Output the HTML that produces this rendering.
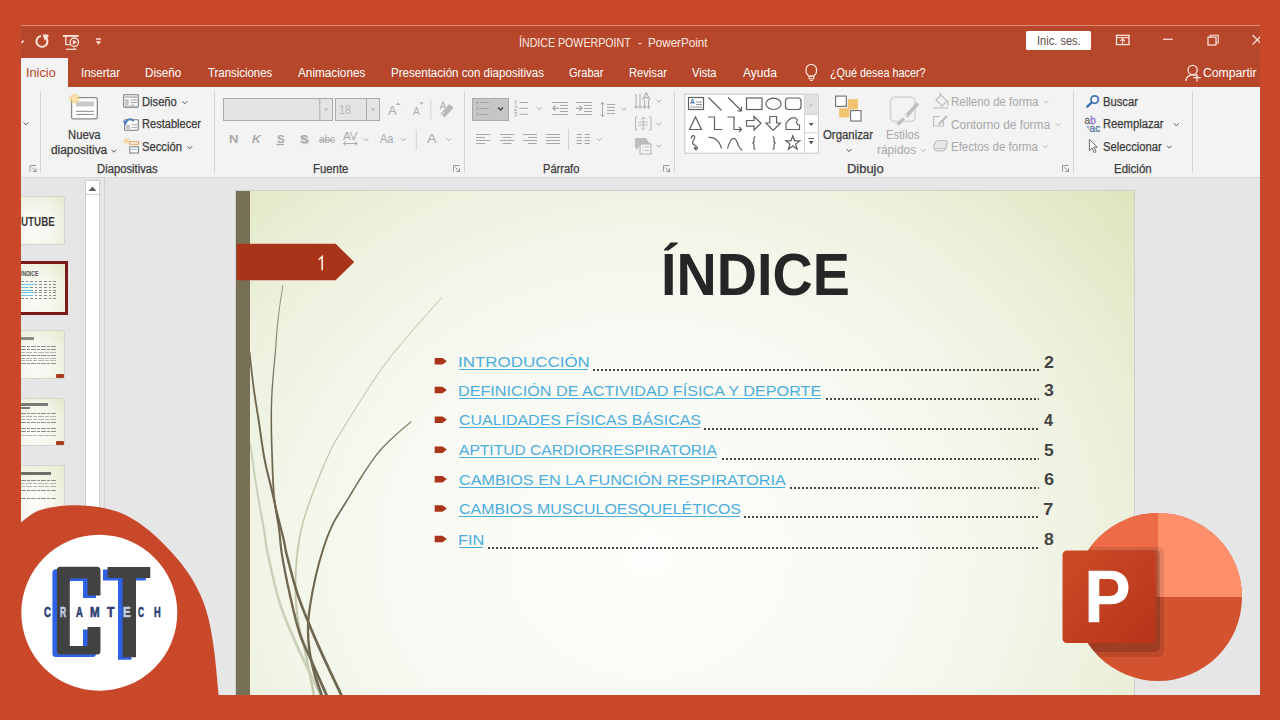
<!DOCTYPE html>
<html><head><meta charset="utf-8"><style>
html,body{margin:0;padding:0;}
body{width:1280px;height:720px;overflow:hidden;position:relative;background:#C9482A;font-family:"Liberation Sans",sans-serif;}
.t{position:absolute;white-space:nowrap;transform-origin:0 0;}
.r{position:absolute;}
svg{position:absolute;overflow:visible;}
</style></head><body>
<div class="r" style="left:21px;top:25px;width:1239px;height:1px;background:#DC8A72;"></div>
<div class="r" style="left:21px;top:26px;width:1239px;height:61px;background:#B7472A;"></div>
<div class="r" style="left:21px;top:87px;width:1239px;height:90px;background:#F3F3F3;"></div>
<div class="r" style="left:21px;top:177px;width:1239px;height:1px;background:#D9D9D9;"></div>
<div class="r" style="left:21px;top:178px;width:1239px;height:517px;background:#E6E6E6;"></div>
<div class="r" style="left:21px;top:58px;width:47px;height:29px;background:#F3F3F3;"></div>
<div class="t" style="left:519.09px;top:37.44px;font-size:12px;line-height:12px;color:#FDEAE2;transform:scaleX(0.8864);">ÍNDICE POWERPOINT</div>
<div class="t" style="left:637.92px;top:37.44px;font-size:12px;line-height:12px;color:#FDEAE2;transform:scaleX(0.9667);">-</div>
<div class="t" style="left:647.73px;top:37.44px;font-size:12px;line-height:12px;color:#FDEAE2;transform:scaleX(0.9701);">PowerPoint</div>
<div class="r" style="left:1026px;top:31px;width:65px;height:18.6px;background:#FFFFFF;border-radius:1.5px;"></div>
<div class="t" style="left:1036.79px;top:35.44px;font-size:12px;line-height:12px;color:#604C48;transform:scaleX(0.9224);">Inic. ses.</div>
<div class="t" style="left:80.64px;top:66.94px;font-size:12px;line-height:12px;color:#FFFFFF;transform:scaleX(0.9594);">Insertar</div>
<div class="t" style="left:145.03px;top:66.94px;font-size:12px;line-height:12px;color:#FFFFFF;transform:scaleX(0.9694);">Diseño</div>
<div class="t" style="left:207.71px;top:66.94px;font-size:12px;line-height:12px;color:#FFFFFF;transform:scaleX(0.9507);">Transiciones</div>
<div class="t" style="left:298.00px;top:66.94px;font-size:12px;line-height:12px;color:#FFFFFF;transform:scaleX(0.9810);">Animaciones</div>
<div class="t" style="left:390.79px;top:66.94px;font-size:12px;line-height:12px;color:#FFFFFF;transform:scaleX(0.9641);">Presentación con diapositivas</div>
<div class="t" style="left:569.45px;top:66.94px;font-size:12px;line-height:12px;color:#FFFFFF;transform:scaleX(0.9221);">Grabar</div>
<div class="t" style="left:629.07px;top:66.94px;font-size:12px;line-height:12px;color:#FFFFFF;transform:scaleX(0.9304);">Revisar</div>
<div class="t" style="left:692.41px;top:66.94px;font-size:12px;line-height:12px;color:#FFFFFF;transform:scaleX(0.9280);">Vista</div>
<div class="t" style="left:743.00px;top:66.94px;font-size:12px;line-height:12px;color:#FFFFFF;">Ayuda</div>
<div class="t" style="left:829.78px;top:66.94px;font-size:12px;line-height:12px;color:#FFFFFF;transform:scaleX(0.9017);">¿Qué desea hacer?</div>
<div class="t" style="left:1203.14px;top:66.94px;font-size:12px;line-height:12px;color:#FFFFFF;transform:scaleX(1.0164);">Compartir</div>
<div class="t" style="left:25.83px;top:66.94px;font-size:12px;line-height:12px;color:#B7472A;transform:scaleX(1.0606);">Inicio</div>
<svg style="left:0;top:0" width="1280" height="720" fill="none" stroke="#FCE6DE" stroke-width="1.6">
<path d="M21.5 43 L23.5 40.5"/>
<path d="M40.9 35.9 A5.5 5.5 0 1 0 45.6 37.2" stroke-width="2"/>
<polygon points="42.6,34.6 48.4,34.6 48.4,36.4 44.8,40.4" fill="#FCE6DE" stroke="none"/>
<path d="M62.9 35.9 L78.7 35.9" stroke-width="1.8"/>
<path d="M65.8 36 L65.8 44.6 L69.8 44.6" stroke-width="1.3"/>
<circle cx="74.3" cy="42.2" r="4.2" stroke-width="1.3"/>
<polygon points="72.9,39.8 77.1,42.2 72.9,44.6" fill="#FCE6DE" stroke="none"/><polygon points="73.6,49 74.3,47 75,49" fill="#FCE6DE" stroke="none"/>
<path d="M66 49.3 L76.5 49.3" stroke-width="1.2"/>
<path d="M96 39 L101 39" stroke-width="1.4"/>
<polygon points="95.8,41.3 101.2,41.3 98.5,44.8" fill="#FCE6DE" stroke="none"/>
<rect x="1116.5" y="35.3" width="12.5" height="9.3" stroke-width="1.3"/>
<path d="M1116.5 37.6 L1129 37.6" stroke-width="1.1"/>
<path d="M1122.7 44 L1122.7 39 M1120.4 41.2 L1122.7 38.8 L1125 41.2" stroke-width="1.1"/>
<path d="M1163 39.3 L1172.8 39.3" stroke-width="1.2"/>
<rect x="1208" y="37.2" width="8" height="7.8" stroke-width="1.2"/>
<path d="M1210.2 37.2 L1210.2 35.2 L1218.2 35.2 L1218.2 43 L1216 43" stroke-width="1.1"/>
<path d="M1252.5 35 L1262 44.6 M1262 35 L1252.5 44.6" stroke-width="1.3"/>
<circle cx="1192.6" cy="70" r="4.6" stroke-width="1.3"/>
<path d="M1185.5 80.8 C1186.5 76.8 1189.5 74.8 1193 74.8 C1194.5 74.8 1195.6 75.2 1196.6 75.8" stroke-width="1.3"/>
<path d="M1197 74 L1197 81.5 M1193.2 77.7 L1200.8 77.7" stroke-width="1.3"/>
<path d="M807.2 74.2 C805.6 72.8 806.1 71.4 806.1 69.5 A5.2 5.2 0 0 1 816.5 69.5 C816.5 71.4 817 72.8 815.4 74.2 L813.8 76.2 L808.8 76.2 Z" stroke-width="1.2"/>
<rect x="809.2" y="76.3" width="4.5" height="2.5" stroke-width="1.1"/>
<path d="M810 80.4 L812.8 80.4" stroke-width="1.1"/>
</svg>
<div class="t" style="left:67.76px;top:129.24px;font-size:12px;line-height:12px;color:#3B3B3B;-webkit-text-stroke:0.25px #3B3B3B;transform:scaleX(0.9377);">Nueva</div>
<div class="t" style="left:50.50px;top:144.14px;font-size:12px;line-height:12px;color:#3B3B3B;-webkit-text-stroke:0.25px #3B3B3B;transform:scaleX(0.9911);">diapositiva</div>
<div class="t" style="left:141.67px;top:96.04px;font-size:12px;line-height:12px;color:#3B3B3B;-webkit-text-stroke:0.25px #3B3B3B;transform:scaleX(0.9304);">Diseño</div>
<div class="t" style="left:141.68px;top:118.44px;font-size:12px;line-height:12px;color:#3B3B3B;-webkit-text-stroke:0.25px #3B3B3B;transform:scaleX(0.9220);">Restablecer</div>
<div class="t" style="left:141.83px;top:141.04px;font-size:12px;line-height:12px;color:#3B3B3B;-webkit-text-stroke:0.25px #3B3B3B;transform:scaleX(0.9348);">Sección</div>
<div class="t" style="left:96.66px;top:163.14px;font-size:12px;line-height:12px;color:#3B3B3B;-webkit-text-stroke:0.25px #3B3B3B;transform:scaleX(0.9384);">Diapositivas</div>
<div class="t" style="left:313.05px;top:163.14px;font-size:12px;line-height:12px;color:#3B3B3B;-webkit-text-stroke:0.25px #3B3B3B;transform:scaleX(0.9471);">Fuente</div>
<div class="t" style="left:543.08px;top:163.14px;font-size:12px;line-height:12px;color:#3B3B3B;-webkit-text-stroke:0.25px #3B3B3B;transform:scaleX(0.9235);">Párrafo</div>
<div class="t" style="left:823.18px;top:129.44px;font-size:12px;line-height:12px;color:#3B3B3B;-webkit-text-stroke:0.25px #3B3B3B;transform:scaleX(0.9489);">Organizar</div>
<div class="t" style="left:846.92px;top:163.14px;font-size:12px;line-height:12px;color:#3B3B3B;-webkit-text-stroke:0.25px #3B3B3B;transform:scaleX(1.0769);">Dibujo</div>
<div class="t" style="left:886.06px;top:129.44px;font-size:12px;line-height:12px;color:#A8A8A8;transform:scaleX(0.9440);">Estilos</div>
<div class="t" style="left:877.20px;top:144.24px;font-size:12px;line-height:12px;color:#A8A8A8;transform:scaleX(0.9948);">rápidos</div>
<div class="t" style="left:950.54px;top:96.44px;font-size:12px;line-height:12px;color:#A8A8A8;transform:scaleX(0.9569);">Relleno de forma</div>
<div class="t" style="left:950.91px;top:118.84px;font-size:12px;line-height:12px;color:#A8A8A8;transform:scaleX(0.9899);">Contorno de forma</div>
<div class="t" style="left:950.54px;top:141.04px;font-size:12px;line-height:12px;color:#A8A8A8;transform:scaleX(0.9588);">Efectos de forma</div>
<div class="t" style="left:1102.66px;top:96.04px;font-size:12px;line-height:12px;color:#3B3B3B;-webkit-text-stroke:0.25px #3B3B3B;transform:scaleX(0.9365);">Buscar</div>
<div class="t" style="left:1102.66px;top:118.44px;font-size:12px;line-height:12px;color:#3B3B3B;-webkit-text-stroke:0.25px #3B3B3B;transform:scaleX(0.9354);">Reemplazar</div>
<div class="t" style="left:1103.13px;top:141.04px;font-size:12px;line-height:12px;color:#3B3B3B;-webkit-text-stroke:0.25px #3B3B3B;transform:scaleX(0.9371);">Seleccionar</div>
<div class="t" style="left:1113.54px;top:163.14px;font-size:12px;line-height:12px;color:#3B3B3B;-webkit-text-stroke:0.25px #3B3B3B;transform:scaleX(0.9574);">Edición</div>
<svg style="left:0;top:0" width="1280" height="720" fill="none"><path d="M23.5 122.5 L25.8 124.8 L28.1 122.5" stroke="#555" stroke-width="1"/><rect x="71.6" y="97.7" width="25.7" height="21.2" rx="1.6" fill="#FFF" stroke="#8A8A8A" stroke-width="1.3"/><rect x="76" y="101.5" width="18" height="5" fill="#C9C9C9"/><path d="M76 111.3 L94 111.3 M76 114.4 L94 114.4" stroke="#8A8A8A" stroke-width="1"/><g stroke="#F4D28C" stroke-width="0.9"><path d="M74.6 98.7 L80.20 98.70"/><path d="M74.6 98.7 L79.77 100.84"/><path d="M74.6 98.7 L78.56 102.66"/><path d="M74.6 98.7 L76.74 103.87"/><path d="M74.6 98.7 L74.60 104.30"/><path d="M74.6 98.7 L72.46 103.87"/><path d="M74.6 98.7 L70.64 102.66"/><path d="M74.6 98.7 L69.43 100.84"/><path d="M74.6 98.7 L69.00 98.70"/><path d="M74.6 98.7 L69.43 96.56"/><path d="M74.6 98.7 L70.64 94.74"/><path d="M74.6 98.7 L72.46 93.53"/><path d="M74.6 98.7 L74.60 93.10"/><path d="M74.6 98.7 L76.74 93.53"/><path d="M74.6 98.7 L78.56 94.74"/><path d="M74.6 98.7 L79.77 96.56"/></g><circle cx="74.6" cy="98.7" r="3.2" fill="#F9E3B0" stroke="#F2C46F" stroke-width="0.6"/><path d="M111.5 149.8 L113.8 152.2 L116.1 149.8" stroke="#555" stroke-width="1"/><rect x="123.7" y="94.7" width="14.6" height="12.4" rx="0.8" fill="#FFF" stroke="#7A7A7A" stroke-width="1.1"/><rect x="124.8" y="96.2" width="12.4" height="1.8" fill="#BDBDBD"/><rect x="125.2" y="99.2" width="3.6" height="6.6" fill="#C4C4C4"/><path d="M130.5 100 L136.8 100 M130.5 102.6 L136.8 102.6 M130.5 105.2 L134.5 105.2" stroke="#8A8A8A" stroke-width="0.9"/><path d="M182.5 101.3 L184.8 103.7 L187.1 101.3" stroke="#555" stroke-width="1"/><rect x="124.6" y="119.7" width="13.7" height="10.5" rx="0.8" fill="#FFF" stroke="#7A7A7A" stroke-width="1.1"/><rect x="126" y="124.8" width="4" height="4.2" fill="#C4C4C4"/><path d="M131.5 124.8 L137 124.8 M131.5 127.6 L137 127.6" stroke="#A0A0A0" stroke-width="0.9"/><path d="M125.5 123.3 C126.5 119.2 131 117.6 133.5 121.2" stroke="#4A7FC1" stroke-width="1.8" fill="none"/><polygon points="122.8,121.2 127.6,121 125.4,125.4" fill="#4A7FC1"/><g stroke="#F2CF86" stroke-width="1"><path d="M126.5 141 L130.30 141.00"/><path d="M126.5 141 L129.19 143.69"/><path d="M126.5 141 L126.50 144.80"/><path d="M126.5 141 L123.81 143.69"/><path d="M126.5 141 L122.70 141.00"/><path d="M126.5 141 L123.81 138.31"/><path d="M126.5 141 L126.50 137.20"/><path d="M126.5 141 L129.19 138.31"/></g><rect x="129.8" y="141.6" width="8.7" height="2.7" fill="none" stroke="#F0A35E" stroke-width="1"/><rect x="129.8" y="146.8" width="8.7" height="6.2" fill="#FFF" stroke="#7A7A7A" stroke-width="1"/><path d="M131 149.3 L137.3 149.3" stroke="#9BB4D6" stroke-width="1"/><path d="M187.5 146.3 L189.8 148.7 L192.1 146.3" stroke="#555" stroke-width="1"/><path d="M30 171.5 L30 165.5 L36 165.5" stroke="#8E8E8E" stroke-width="0.9"/><path d="M31.8 167.3 L36 171.5 M36 168.3 L36 171.5 L32.8 171.5" stroke="#8E8E8E" stroke-width="0.9"/><path d="M453.5 171.5 L453.5 165.5 L459.5 165.5" stroke="#8E8E8E" stroke-width="0.9"/><path d="M455.3 167.3 L459.5 171.5 M459.5 168.3 L459.5 171.5 L456.3 171.5" stroke="#8E8E8E" stroke-width="0.9"/><path d="M663.5 171.5 L663.5 165.5 L669.5 165.5" stroke="#8E8E8E" stroke-width="0.9"/><path d="M665.3 167.3 L669.5 171.5 M669.5 168.3 L669.5 171.5 L666.3 171.5" stroke="#8E8E8E" stroke-width="0.9"/><path d="M1062.5 171.5 L1062.5 165.5 L1068.5 165.5" stroke="#8E8E8E" stroke-width="0.9"/><path d="M1064.3 167.3 L1068.5 171.5 M1068.5 168.3 L1068.5 171.5 L1065.3 171.5" stroke="#8E8E8E" stroke-width="0.9"/><rect x="223.5" y="98.5" width="109" height="22" fill="#E4E4E4" stroke="#ABABAB" stroke-width="1"/><path d="M319.8 98.5 L319.8 120.5" stroke="#ABABAB" stroke-width="1"/><polygon points="323.8,108.6 328.2,108.6 326,111" fill="#B5B5B5"/><rect x="335.5" y="98.5" width="44" height="22" fill="#E4E4E4" stroke="#ABABAB" stroke-width="1"/><path d="M366.5 98.5 L366.5 120.5" stroke="#ABABAB" stroke-width="1"/><polygon points="370.8,108.6 375.2,108.6 373,111" fill="#B5B5B5"/><polygon points="396,105 398.2,102.5 400.4,105" fill="#B0B0B0"/><polygon points="419.5,102.2 423.8,102.2 421.6,104.8" fill="#B0B0B0"/><path d="M430.8 99 L430.8 119.5 M416.3 129.5 L416.3 150" stroke="#D2D2D2" stroke-width="1"/><path d="M440 109.5 L443 102 L446 109.5 M441.2 106.8 L444.8 106.8" stroke="#B5B5B5" stroke-width="1.2"/><path d="M442.5 115.5 L451.5 106" stroke="#B8B8B8" stroke-width="5.5"/><path d="M441.6 114.6 L444.2 111.8" stroke="#F3F3F3" stroke-width="1"/><path d="M276.5 144.5 L284 144.5" stroke="#A6A6A6" stroke-width="1.3"/><path d="M318.8 140.2 L335.2 140.2" stroke="#A6A6A6" stroke-width="1"/><path d="M343.5 143.6 L357 143.6 M345.5 141.6 L343.5 143.6 L345.5 145.6 M355 141.6 L357 143.6 L355 145.6" stroke="#A6A6A6" stroke-width="1"/><path d="M363.8 138.3 L366.1 140.7 L368.4 138.3" stroke="#A9A9A9" stroke-width="1"/><path d="M400.8 138.3 L403.1 140.7 L405.4 138.3" stroke="#A9A9A9" stroke-width="1"/><path d="M446.5 138.3 L448.8 140.7 L451.1 138.3" stroke="#A9A9A9" stroke-width="1"/><rect x="472.5" y="98.5" width="36" height="22" fill="#C6C6C6" stroke="#A9A9A9" stroke-width="1"/><circle cx="477.5" cy="102.5" r="0.9" fill="#9A9A9A"/><path d="M480.5 102.5 L489 102.5" stroke="#9E9E9E" stroke-width="0.9"/><circle cx="477.5" cy="108.5" r="0.9" fill="#9A9A9A"/><path d="M480.5 108.5 L489 108.5" stroke="#9E9E9E" stroke-width="0.9"/><circle cx="477.5" cy="114.5" r="0.9" fill="#9A9A9A"/><path d="M480.5 114.5 L489 114.5" stroke="#9E9E9E" stroke-width="0.9"/><path d="M498.2 107.6 L500.6 110 L503 107.6" stroke="#444" stroke-width="1.4"/><path d="M519.5 102.5 L528 102.5" stroke="#A9A9A9" stroke-width="1"/><path d="M519.5 108.3 L528 108.3" stroke="#A9A9A9" stroke-width="1"/><path d="M519.5 114.3 L528 114.3" stroke="#A9A9A9" stroke-width="1"/><path d="M514.6 101.2 L515.8 100.4 L515.8 104.6 M514.4 106.8 C514.8 105.8 517 105.8 517 107 C517 108 514.4 109.2 514.4 110.4 L517.2 110.4 M514.4 112.4 L516.8 112.4 L515.4 114 C517.4 114 517.4 116.6 514.4 116.4" stroke="#A9A9A9" stroke-width="0.9"/><path d="M537.0 107.3 L539.3 109.7 L541.6 107.3" stroke="#A9A9A9" stroke-width="1"/><path d="M552 102.5 L568 102.5 M560 105.5 L568 105.5 M560 108.5 L568 108.5 M560 111.5 L568 111.5 M552 114.5 L568 114.5" stroke="#A9A9A9" stroke-width="1"/><path d="M559 108.3 L553 108.3 M555.5 105.8 L553 108.3 L555.5 110.8" stroke="#A9A9A9" stroke-width="1.3"/><path d="M576 102.5 L592 102.5 M584 105.5 L592 105.5 M584 108.5 L592 108.5 M584 111.5 L592 111.5 M576 114.5 L592 114.5" stroke="#A9A9A9" stroke-width="1"/><path d="M576 108.3 L582 108.3 M579.5 105.8 L582 108.3 L579.5 110.8" stroke="#A9A9A9" stroke-width="1.3"/><path d="M602.5 102.5 L602.5 116.5 M600.5 104.5 L602.5 102.3 L604.5 104.5 M600.5 114.5 L602.5 116.7 L604.5 114.5 M607 104.5 L615 104.5 M607 107.5 L615 107.5 M607 110.5 L615 110.5 M607 113.5 L615 113.5" stroke="#A9A9A9" stroke-width="1"/><path d="M621.5 107.8 L623.8 110.2 L626.1 107.8" stroke="#A9A9A9" stroke-width="1"/><path d="M476 134.5 L490 134.5 M476 137.5 L485 137.5 M476 140.5 L490 140.5 M476 143.5 L485 143.5" stroke="#A9A9A9" stroke-width="1"/><path d="M500 134.5 L514 134.5 M502.5 137.5 L511.5 137.5 M500 140.5 L514 140.5 M502.5 143.5 L511.5 143.5" stroke="#A9A9A9" stroke-width="1"/><path d="M523 134.5 L537 134.5 M528 137.5 L537 137.5 M523 140.5 L537 140.5 M528 143.5 L537 143.5" stroke="#A9A9A9" stroke-width="1"/><path d="M546 134.5 L560 134.5 M546 137.5 L560 137.5 M546 140.5 L560 140.5 M546 143.5 L560 143.5" stroke="#A9A9A9" stroke-width="1"/><path d="M568.5 129 L568.5 150" stroke="#D2D2D2" stroke-width="1"/><path d="M576.5 134.5 L582 134.5 M584.5 134.5 L590 134.5 M576.5 137.5 L582 137.5 M584.5 137.5 L590 137.5 M576.5 140.5 L582 140.5 M584.5 140.5 L590 140.5 M576.5 143.5 L582 143.5 M584.5 143.5 L590 143.5" stroke="#A9A9A9" stroke-width="1"/><path d="M596.8 138.3 L599.1 140.7 L601.4 138.3" stroke="#A9A9A9" stroke-width="1"/><path d="M636 94 L636 108 M640 94 L640 108 M644.5 100 L644.5 108 M648.5 100 L648.5 108" stroke="#B0B0B0" stroke-width="1.1"/><path d="M634.3 106 L636 108.5 L637.7 106 M638.3 106 L640 108.5 L641.7 106 M642.8 106 L644.5 108.5 L646.2 106 M646.8 106 L648.5 108.5 L650.2 106" stroke="#B0B0B0" stroke-width="1"/><path d="M642.6 100 L646.3 92.8 L650 100 M643.8 97.6 L648.8 97.6" stroke="#B0B0B0" stroke-width="1.2"/><path d="M656.5 99.8 L658.8 102.2 L661.1 99.8" stroke="#A9A9A9" stroke-width="1"/><path d="M637.5 117 L635.5 117 L635.5 130 L637.5 130 M649 117 L651 117 L651 130 L649 130" stroke="#B5B5B5" stroke-width="1"/><path d="M643.2 117 L643.2 130 M641 119.3 L643.2 117 L645.4 119.3 M641 127.7 L643.2 130 L645.4 127.7 M638.5 122 L648 122 M638.5 125 L648 125" stroke="#B5B5B5" stroke-width="0.9"/><path d="M656.5 122.8 L658.8 125.2 L661.1 122.8" stroke="#A9A9A9" stroke-width="1"/><polygon points="635,138 646,138 650,144 640,144 637,150 635,147" fill="#BDBDBD"/><rect x="640" y="144" width="11" height="10" fill="#F3F3F3" stroke="#B0B0B0" stroke-width="1"/><path d="M642.5 147 L643.5 147 M645 147 L649 147 M642.5 150.5 L643.5 150.5 M645 150.5 L649 150.5" stroke="#B8B8B8" stroke-width="0.9"/><path d="M656.5 144.8 L658.8 147.2 L661.1 144.8" stroke="#A9A9A9" stroke-width="1"/><rect x="684.8" y="94.2" width="133.5" height="59" fill="#FFFFFF" stroke="#C6C6C6" stroke-width="1"/><rect x="804.5" y="94.7" width="13.3" height="19.7" fill="#E1E1E1"/><path d="M804.5 94.2 L804.5 153.2 M804.5 114.4 L818.3 114.4 M804.5 132.8 L818.3 132.8" stroke="#D4D4D4" stroke-width="1"/><polygon points="809,106 811.2,103.5 813.4,106" fill="#C4C4C4"/><polygon points="808.8,123 813.6,123 811.2,126" fill="#555"/><path d="M808.5 138.5 L813.9 138.5" stroke="#555" stroke-width="1"/><polygon points="808.8,141 813.6,141 811.2,144.5" fill="#555"/><rect x="688.5" y="97.5" width="15" height="12" fill="#FFF" stroke="#606060" stroke-width="1.2"/><path d="M696 102 L702 102 M696 104.5 L702 104.5 M690 107 L702 107" stroke="#7A7A7A" stroke-width="0.8"/><text x="690" y="104.2" font-size="6.5" font-weight="bold" fill="#4B72A8" font-family="Liberation Sans">A</text><path d="M708.5 97.5 L721.5 110.5" stroke="#606060" stroke-width="1.2"/><path d="M728 97.5 L741.5 110.8 M737.5 110.8 L741.5 110.8 L741.5 106.8" stroke="#606060" stroke-width="1.2"/><rect x="746.5" y="98" width="15.5" height="11.5" fill="none" stroke="#606060" stroke-width="1.2"/><ellipse cx="773.5" cy="103.8" rx="7.6" ry="5.7" fill="none" stroke="#606060" stroke-width="1.2"/><rect x="785.5" y="98" width="15.5" height="11.5" rx="3" fill="none" stroke="#606060" stroke-width="1.2"/><polygon points="695.5,117 701.5,129.5 689.5,129.5" fill="none" stroke="#606060" stroke-width="1.2"/><path d="M708 117 L714.5 117 L714.5 129.5 L722.5 129.5" fill="none" stroke="#606060" stroke-width="1.2"/><path d="M727.5 117 L734 117 L734 129.5 L741.5 129.5 M739 127 L741.5 129.5 L739 132" fill="none" stroke="#606060" stroke-width="1.2"/><polygon points="746.5,120.5 754,120.5 754,116.5 761,123.3 754,130 754,126.2 746.5,126.2" fill="none" stroke="#606060" stroke-width="1.2"/><polygon points="769.8,116.5 776.6,116.5 776.6,123 780.5,123 773.2,130.3 766,123 769.8,123" fill="none" stroke="#606060" stroke-width="1.2"/><path d="M786 123.5 L786 129.5 L799.5 129.5 L799.5 125 C797 125 795.5 122.5 797.5 120 C795 116 790 117 786 123.5 Z" fill="none" stroke="#606060" stroke-width="1.2"/><path d="M691 138.5 C692 134.5 695.5 135 694.5 138.5 C693.5 141 691.5 142 693 144 C694.5 145.5 697.5 145.5 697.5 148 C697.5 150 694.5 150 694.5 148 C694.5 146.5 696.5 147 696 150.5" fill="none" stroke="#606060" stroke-width="1.2"/><path d="M708.5 137.5 C714 137 719.5 140.5 721.5 148.5" fill="none" stroke="#606060" stroke-width="1.2"/><path d="M727.5 148.5 C731 136 735 136 737.5 143 C739.5 149 741 150 742.5 150" fill="none" stroke="#606060" stroke-width="1.2"/><path d="M755.5 136.5 C753.5 136.5 754 139 754 141 C754 142.5 753 143 752.2 143 C753 143 754 143.5 754 145 C754 147 753.5 149.5 755.5 149.5" fill="none" stroke="#606060" stroke-width="1.2"/><path d="M772.5 136.5 C774.5 136.5 774 139 774 141 C774 142.5 775 143 775.8 143 C775 143 774 143.5 774 145 C774 147 774.5 149.5 772.5 149.5" fill="none" stroke="#606060" stroke-width="1.2"/><polygon points="792.8,135.8 794.6,140.8 799.8,140.9 795.6,144.1 797.2,149.2 792.8,146.1 788.4,149.2 790,144.1 785.8,140.9 791,140.8" fill="none" stroke="#606060" stroke-width="1.2"/><rect x="847.8" y="99.1" width="10.2" height="10.2" fill="#F2C46F"/><rect x="839.2" y="108.3" width="10.1" height="9.1" fill="#F2C46F"/><rect x="835.6" y="96.1" width="10.7" height="10.3" fill="#FFF" stroke="#6E6E6E" stroke-width="1.1"/><rect x="850.6" y="110.6" width="10.4" height="10.4" fill="#FFF" stroke="#6E6E6E" stroke-width="1.1"/><path d="M846.8 149.2 L849.1 151.6 L851.4 149.2" stroke="#444" stroke-width="1"/><rect x="890.5" y="97" width="24.5" height="24.5" rx="4.5" fill="none" stroke="#D2D2D2" stroke-width="1.5"/><path d="M897.5 124.5 L904 118.5" stroke="#BEBEBE" stroke-width="3.5"/><path d="M906 116.5 L917.8 103.5" stroke="#BEBEBE" stroke-width="3.6"/><path d="M903.5 118 L907 114.5" stroke="#F3F3F3" stroke-width="1.2"/><path d="M921.0 149.3 L923.3 151.7 L925.6 149.3" stroke="#B5B5B5" stroke-width="1"/><path d="M936 100 L941 95 L947 101 L942 106 Z" fill="none" stroke="#BDBDBD" stroke-width="1.2"/><path d="M940 95 L940 92.5" stroke="#BDBDBD" stroke-width="1.2"/><path d="M947 101 C949 103 948.5 105 947.5 105" stroke="#BDBDBD" stroke-width="1.2"/><rect x="933" y="106.8" width="15" height="2.2" fill="#D6D6D6"/><path d="M940 116.5 L933.5 116.5 L933.5 126 L943.5 126 L943.5 121" fill="none" stroke="#BDBDBD" stroke-width="1.1"/><path d="M938.5 124.5 L947 116" stroke="#BDBDBD" stroke-width="2"/><path d="M934 148 C933 146 935 141 938 140.5 L946 140.5 C947.5 141 947.5 143 946.5 146 C945.5 149.5 944 151 942 151 L936 151 C935 151 934.3 149.5 934 148 Z" fill="#E6E6E6" stroke="#BDBDBD" stroke-width="1.1"/><path d="M934.5 148.5 L944.5 148.5" stroke="#C9C9C9" stroke-width="1"/><path d="M1043.7 100.8 L1046.0 103.2 L1048.3 100.8" stroke="#B5B5B5" stroke-width="1"/><path d="M1056.0 123.3 L1058.3 125.7 L1060.6 123.3" stroke="#B5B5B5" stroke-width="1"/><path d="M1043.0 145.3 L1045.3 147.7 L1047.6 145.3" stroke="#B5B5B5" stroke-width="1"/><circle cx="1094.7" cy="99.6" r="3.7" fill="#FFF" stroke="#3F73AE" stroke-width="1.8"/><path d="M1091.6 102.7 L1087.3 106.6" stroke="#3F73AE" stroke-width="2.4" stroke-linecap="round"/><text x="1084.6" y="124.3" font-size="10" fill="#666" font-family="Liberation Sans" stroke="#666" stroke-width="0.3">a</text><text x="1090.2" y="124.3" font-size="10" fill="#8F6CC4" font-family="Liberation Sans" stroke="#8F6CC4" stroke-width="0.3">b</text><text x="1089.6" y="131.6" font-size="10" fill="#52779F" font-family="Liberation Sans" stroke="#52779F" stroke-width="0.3">ac</text><path d="M1087.8 125.5 L1087.8 128 L1089.6 128" stroke="#5C7EA8" stroke-width="0.9"/><path d="M1089.4 139.3 L1089.4 150.5 L1092 148 L1094.2 152.6 L1096 151.7 L1093.8 147.2 L1097.2 147.2 Z" fill="#FFF" stroke="#6B6B6B" stroke-width="1"/><path d="M1174.0 123.3 L1176.3 125.7 L1178.6 123.3" stroke="#555" stroke-width="1"/><path d="M1167.0 145.8 L1169.3 148.2 L1171.6 145.8" stroke="#555" stroke-width="1"/></svg>
<div class="t" style="left:338.68px;top:104.04px;font-size:12px;line-height:12px;color:#B8B8B8;transform:scaleX(0.9167);">18</div>
<div class="t" style="left:388.00px;top:103.87px;font-size:13.5px;line-height:13.5px;color:#ADADAD;transform:scaleX(0.9667);">A</div>
<div class="t" style="left:412.50px;top:106.16px;font-size:10.8px;line-height:10.8px;color:#ADADAD;transform:scaleX(0.9306);">A</div>
<div class="t" style="left:228.94px;top:133.93px;font-size:11.3px;line-height:11.3px;color:#A9A9A9;font-weight:bold;transform:scaleX(1.1567);">N</div>
<div class="t" style="left:251.51px;top:133.93px;font-size:11.3px;line-height:11.3px;color:#A9A9A9;font-weight:bold;transform:scaleX(1.0616);font-style:italic;">K</div>
<div class="t" style="left:276.60px;top:133.93px;font-size:11.3px;line-height:11.3px;color:#A9A9A9;font-weight:bold;transform:scaleX(1.0074);">S</div>
<div class="t" style="left:299.67px;top:134.03px;font-size:11.3px;line-height:11.3px;color:#A9A9A9;font-weight:bold;transform:scaleX(1.1029);text-shadow:1px 1px 1px #C8C8C8;">S</div>
<div class="t" style="left:319.00px;top:135.13px;font-size:10px;line-height:10px;color:#A9A9A9;transform:scaleX(0.9968);">abc</div>
<div class="t" style="left:343.00px;top:131.29px;font-size:11px;line-height:11px;color:#A9A9A9;transform:scaleX(1.0507);">AV</div>
<div class="t" style="left:380.00px;top:132.94px;font-size:12px;line-height:12px;color:#A9A9A9;transform:scaleX(0.9184);">Aa</div>
<div class="t" style="left:427.00px;top:132.47px;font-size:13.5px;line-height:13.5px;color:#A9A9A9;transform:scaleX(1.0556);">A</div>
<div class="r" style="left:40px;top:91px;width:1px;height:82px;background:#D4D4D4;"></div>
<div class="r" style="left:214px;top:91px;width:1px;height:82px;background:#D4D4D4;"></div>
<div class="r" style="left:464px;top:91px;width:1px;height:82px;background:#D4D4D4;"></div>
<div class="r" style="left:674px;top:91px;width:1px;height:82px;background:#D4D4D4;"></div>
<div class="r" style="left:1073px;top:91px;width:1px;height:82px;background:#D4D4D4;"></div>
<div class="r" style="left:1192px;top:91px;width:1px;height:82px;background:#D4D4D4;"></div>
<div class="r" style="left:15px;top:197.2px;width:49.2px;height:46.60000000000002px;background:radial-gradient(ellipse 90% 100% at 40% 65%, #FDFDFB 0%, #F3F5EA 50%, #E2E8C6 100%);box-shadow:0 0 0 0.6px #C9C9C4;"></div>
<div class="t" style="left:20.90px;top:215.10px;font-size:13px;line-height:13px;color:#383838;font-weight:bold;transform:scaleX(0.7540);">UTUBE</div>
<div class="r" style="left:12px;top:260.9px;width:55.7px;height:53.7px;background:#7A1A1A;"></div>
<div class="r" style="left:12px;top:264px;width:53px;height:47.9px;background:radial-gradient(ellipse 90% 100% at 40% 65%, #FDFDFB 0%, #F3F5EA 50%, #E2E8C6 100%);"></div>
<div class="t" style="left:20.78px;top:269.67px;font-size:7px;line-height:7px;color:#505050;font-weight:bold;transform:scaleX(0.7328);">ÍNDICE</div>
<div class="r" style="left:21px;top:281.2px;width:36px;height:1px;background:repeating-linear-gradient(90deg,#8A8A86 0 2.6px,transparent 2.6px 4.6px);"></div>
<div class="r" style="left:21px;top:284px;width:36px;height:1px;background:repeating-linear-gradient(90deg,#8A8A86 0 2.6px,transparent 2.6px 4.6px);"></div>
<div class="r" style="left:21px;top:284px;width:14px;height:1px;background:#6EC3EA;"></div>
<div class="r" style="left:21px;top:286.8px;width:36px;height:1px;background:repeating-linear-gradient(90deg,#8A8A86 0 2.6px,transparent 2.6px 4.6px);"></div>
<div class="r" style="left:21px;top:286.8px;width:8px;height:1px;background:#6EC3EA;"></div>
<div class="r" style="left:21px;top:289.6px;width:36px;height:1px;background:repeating-linear-gradient(90deg,#8A8A86 0 2.6px,transparent 2.6px 4.6px);"></div>
<div class="r" style="left:21px;top:289.6px;width:10px;height:1px;background:#6EC3EA;"></div>
<div class="r" style="left:21px;top:292.4px;width:36px;height:1px;background:repeating-linear-gradient(90deg,#8A8A86 0 2.6px,transparent 2.6px 4.6px);"></div>
<div class="r" style="left:21px;top:292.4px;width:14px;height:1px;background:#6EC3EA;"></div>
<div class="r" style="left:21px;top:295.3px;width:36px;height:1px;background:repeating-linear-gradient(90deg,#8A8A86 0 2.6px,transparent 2.6px 4.6px);"></div>
<div class="r" style="left:21px;top:295.3px;width:12px;height:1px;background:#6EC3EA;"></div>
<div class="r" style="left:21px;top:298px;width:36px;height:1px;background:repeating-linear-gradient(90deg,#8A8A86 0 2.6px,transparent 2.6px 4.6px);"></div>
<div class="r" style="left:15px;top:331.25px;width:49.2px;height:47.05000000000001px;background:radial-gradient(ellipse 90% 100% at 40% 65%, #FDFDFB 0%, #F3F5EA 50%, #E2E8C6 100%);box-shadow:0 0 0 0.6px #C9C9C4;"></div>
<div class="r" style="left:21px;top:337px;width:13px;height:2.5px;background:#8A8A86;"></div>
<div class="r" style="left:21px;top:346px;width:36px;height:1px;background:repeating-linear-gradient(90deg,#8E8E8A 0 5px,transparent 5px 6px,#8E8E8A 6px 9px,transparent 9px 10px);"></div>
<div class="r" style="left:21px;top:349px;width:36px;height:1px;background:repeating-linear-gradient(90deg,#8E8E8A 0 5px,transparent 5px 6px,#8E8E8A 6px 9px,transparent 9px 10px);"></div>
<div class="r" style="left:21px;top:351.5px;width:36px;height:1px;background:repeating-linear-gradient(90deg,#B4B4B0 0 4px,transparent 4px 5px,#B4B4B0 5px 11px,transparent 11px 12px);"></div>
<div class="r" style="left:21px;top:354.5px;width:36px;height:1px;background:repeating-linear-gradient(90deg,#8E8E8A 0 5px,transparent 5px 6px,#8E8E8A 6px 9px,transparent 9px 10px);"></div>
<div class="r" style="left:21px;top:357.5px;width:36px;height:1px;background:repeating-linear-gradient(90deg,#B4B4B0 0 4px,transparent 4px 5px,#B4B4B0 5px 11px,transparent 11px 12px);"></div>
<div class="r" style="left:21px;top:360px;width:36px;height:1px;background:repeating-linear-gradient(90deg,#B4B4B0 0 4px,transparent 4px 5px,#B4B4B0 5px 11px,transparent 11px 12px);"></div>
<div class="r" style="left:21px;top:362.5px;width:36px;height:1px;background:repeating-linear-gradient(90deg,#8E8E8A 0 5px,transparent 5px 6px,#8E8E8A 6px 9px,transparent 9px 10px);"></div>
<div class="r" style="left:56px;top:374px;width:8px;height:4px;background:#A83C1E;border-radius:1px;"></div>
<div class="r" style="left:15px;top:398.7px;width:49.2px;height:46.60000000000002px;background:radial-gradient(ellipse 90% 100% at 40% 65%, #FDFDFB 0%, #F3F5EA 50%, #E2E8C6 100%);box-shadow:0 0 0 0.6px #C9C9C4;"></div>
<div class="r" style="left:21px;top:403px;width:27px;height:2.5px;background:#7A7A76;"></div>
<div class="r" style="left:21px;top:406.5px;width:9px;height:2.5px;background:#7A7A76;"></div>
<div class="r" style="left:21px;top:413px;width:36px;height:1px;background:repeating-linear-gradient(90deg,#8E8E8A 0 5px,transparent 5px 6px,#8E8E8A 6px 9px,transparent 9px 10px);"></div>
<div class="r" style="left:21px;top:416px;width:36px;height:1px;background:repeating-linear-gradient(90deg,#B4B4B0 0 4px,transparent 4px 5px,#B4B4B0 5px 11px,transparent 11px 12px);"></div>
<div class="r" style="left:21px;top:418.5px;width:36px;height:1px;background:repeating-linear-gradient(90deg,#B4B4B0 0 4px,transparent 4px 5px,#B4B4B0 5px 11px,transparent 11px 12px);"></div>
<div class="r" style="left:21px;top:422px;width:36px;height:1px;background:repeating-linear-gradient(90deg,#8E8E8A 0 5px,transparent 5px 6px,#8E8E8A 6px 9px,transparent 9px 10px);"></div>
<div class="r" style="left:21px;top:428px;width:36px;height:1px;background:repeating-linear-gradient(90deg,#8E8E8A 0 5px,transparent 5px 6px,#8E8E8A 6px 9px,transparent 9px 10px);"></div>
<div class="r" style="left:21px;top:431px;width:36px;height:1px;background:repeating-linear-gradient(90deg,#8E8E8A 0 5px,transparent 5px 6px,#8E8E8A 6px 9px,transparent 9px 10px);"></div>
<div class="r" style="left:21px;top:435px;width:36px;height:1px;background:repeating-linear-gradient(90deg,#B4B4B0 0 4px,transparent 4px 5px,#B4B4B0 5px 11px,transparent 11px 12px);"></div>
<div class="r" style="left:56px;top:441px;width:8px;height:4px;background:#A83C1E;border-radius:1px;"></div>
<div class="r" style="left:15px;top:465.7px;width:49.2px;height:64.30000000000001px;background:radial-gradient(ellipse 90% 100% at 40% 65%, #FDFDFB 0%, #F3F5EA 50%, #E2E8C6 100%);box-shadow:0 0 0 0.6px #C9C9C4;"></div>
<div class="r" style="left:21px;top:472px;width:30px;height:2.5px;background:#6E6E6A;"></div>
<div class="r" style="left:21px;top:480px;width:36px;height:1px;background:repeating-linear-gradient(90deg,#8E8E8A 0 5px,transparent 5px 6px,#8E8E8A 6px 9px,transparent 9px 10px);"></div>
<div class="r" style="left:21px;top:483px;width:36px;height:1px;background:repeating-linear-gradient(90deg,#B4B4B0 0 4px,transparent 4px 5px,#B4B4B0 5px 11px,transparent 11px 12px);"></div>
<div class="r" style="left:21px;top:486px;width:36px;height:1px;background:repeating-linear-gradient(90deg,#B4B4B0 0 4px,transparent 4px 5px,#B4B4B0 5px 11px,transparent 11px 12px);"></div>
<div class="r" style="left:21px;top:490px;width:36px;height:1px;background:repeating-linear-gradient(90deg,#8E8E8A 0 5px,transparent 5px 6px,#8E8E8A 6px 9px,transparent 9px 10px);"></div>
<div class="r" style="left:21px;top:498px;width:36px;height:1px;background:repeating-linear-gradient(90deg,#8E8E8A 0 5px,transparent 5px 6px,#8E8E8A 6px 9px,transparent 9px 10px);"></div>
<div class="r" style="left:85px;top:180px;width:15px;height:515px;background:#FFFFFF;box-shadow:inset 0 0 0 1px #CFCFCF;"></div>
<div class="r" style="left:85px;top:194px;width:15px;height:1px;background:#CFCFCF;"></div>
<svg style="left:0;top:0" width="1280" height="720"><polygon points="88.5,191 92.5,186.5 96.5,191" fill="#606060"/></svg>
<div class="r" style="left:0px;top:0px;width:21px;height:720px;background:#C9482A;"></div>
<div class="r" style="left:104px;top:178px;width:1px;height:517px;background:#D3D3D3;"></div>
<div class="r" style="left:236px;top:191px;width:898px;height:504px;background:radial-gradient(ellipse 640px 560px at 46% 72%, #FDFDFB 0%, #F7F9F1 45%, #ECF0DB 75%, #DDE5BB 100%);box-shadow:0 0 0 1px #CFCFCF;"></div>
<div class="r" style="left:236px;top:191px;width:14px;height:504px;background:#776F56;"></div>
<svg style="left:0;top:0" width="1280" height="720"><defs><clipPath id="sc"><rect x="250" y="190" width="884" height="505"/></clipPath><linearGradient id="l1g" gradientUnits="userSpaceOnUse" x1="0" y1="285" x2="0" y2="420"><stop offset="0" stop-color="#9A9682"/><stop offset="1" stop-color="#6F6851"/></linearGradient><linearGradient id="l4g" gradientUnits="userSpaceOnUse" x1="411" y1="421" x2="340" y2="510"><stop offset="0" stop-color="#8F8A74"/><stop offset="1" stop-color="#6F6851"/></linearGradient></defs><g clip-path="url(#sc)"><polygon points="441.50,297.24 438.81,300.31 435.40,304.14 431.39,308.61 426.88,313.63 421.99,319.10 416.83,324.91 411.51,330.97 406.14,337.17 400.84,343.42 395.71,349.61 390.86,355.64 386.41,361.41 382.16,367.20 377.86,373.28 373.55,379.58 369.26,386.01 365.04,392.48 360.92,398.90 356.94,405.19 353.14,411.27 349.56,417.05 346.24,422.44 343.21,427.35 340.52,431.70 338.22,435.43 336.31,438.56 334.74,441.20 333.43,443.45 332.35,445.39 331.42,447.14 330.61,448.77 329.83,450.39 329.06,452.09 328.22,453.97 327.25,456.12 326.11,458.64 324.83,461.48 323.50,464.52 322.14,467.70 320.76,471.01 319.36,474.39 317.98,477.83 316.60,481.28 315.26,484.71 313.96,488.08 312.71,491.37 311.52,494.54 310.42,497.55 309.38,500.42 308.39,503.20 307.44,505.90 306.53,508.54 305.67,511.12 304.84,513.66 304.05,516.18 303.30,518.68 302.58,521.18 301.90,523.70 301.24,526.24 300.61,528.82 300.02,531.41 299.47,533.98 298.95,536.54 298.47,539.09 298.03,541.65 297.62,544.20 297.23,546.77 296.88,549.35 296.55,551.95 296.25,554.57 295.97,557.23 295.71,559.92 295.48,562.67 295.27,565.48 295.08,568.33 294.92,571.22 294.79,574.13 294.69,577.04 294.61,579.95 294.56,582.84 294.53,585.69 294.54,588.50 294.57,591.25 294.63,593.93 294.71,596.53 294.83,599.08 294.97,601.57 295.14,604.03 295.33,606.45 295.55,608.84 295.80,611.22 296.08,613.59 296.38,615.96 296.72,618.35 297.07,620.75 297.46,623.18 297.88,625.60 298.35,627.98 298.85,630.32 299.39,632.65 299.95,634.97 300.53,637.31 301.13,639.67 301.74,642.09 302.36,644.56 302.97,647.12 303.58,649.77 304.19,652.54 304.81,655.54 305.48,658.81 306.18,662.28 306.90,665.90 307.63,669.58 308.35,673.26 309.06,676.87 309.73,680.34 310.37,683.60 310.95,686.58 311.47,689.22 311.91,691.44 312.27,693.26 312.57,694.76 312.82,695.98 313.02,696.95 313.18,697.72 313.31,698.31 313.41,698.77 313.49,699.13 313.55,699.43 313.61,699.69 313.67,699.96 313.73,700.28 316.27,699.72 316.19,699.38 316.11,699.09 316.04,698.82 315.96,698.53 315.87,698.19 315.77,697.75 315.63,697.18 315.46,696.43 315.25,695.47 314.99,694.26 314.67,692.77 314.29,690.96 313.84,688.74 313.31,686.11 312.72,683.13 312.07,679.88 311.38,676.41 310.66,672.80 309.93,669.12 309.19,665.44 308.45,661.83 307.74,658.35 307.05,655.07 306.41,652.06 305.79,649.27 305.16,646.60 304.52,644.03 303.89,641.54 303.27,639.13 302.66,636.77 302.06,634.45 301.49,632.14 300.95,629.85 300.44,627.54 299.97,625.21 299.54,622.82 299.14,620.42 298.78,618.04 298.43,615.68 298.12,613.34 297.83,610.99 297.57,608.63 297.34,606.27 297.13,603.87 296.95,601.44 296.80,598.97 296.67,596.45 296.57,593.87 296.50,591.22 296.46,588.49 296.44,585.70 296.45,582.86 296.49,579.99 296.55,577.10 296.64,574.20 296.76,571.31 296.90,568.44 297.07,565.60 297.27,562.81 297.49,560.08 297.73,557.40 298.00,554.76 298.28,552.15 298.59,549.57 298.93,547.01 299.30,544.46 299.69,541.92 300.12,539.39 300.58,536.85 301.08,534.31 301.61,531.76 302.19,529.18 302.80,526.62 303.43,524.10 304.10,521.61 304.80,519.12 305.54,516.63 306.31,514.13 307.12,511.59 307.96,509.02 308.85,506.39 309.78,503.69 310.76,500.92 311.78,498.05 312.87,495.04 314.04,491.87 315.28,488.59 316.56,485.21 317.89,481.78 319.25,478.34 320.62,474.90 322.00,471.52 323.37,468.22 324.71,465.04 326.02,462.01 327.29,459.16 328.42,456.64 329.37,454.48 330.20,452.60 330.96,450.91 331.71,449.30 332.50,447.69 333.40,445.96 334.46,444.03 335.74,441.79 337.30,439.15 339.20,436.02 341.48,432.30 344.16,427.93 347.17,423.01 350.48,417.62 354.05,411.84 357.83,405.76 361.80,399.46 365.90,393.04 370.11,386.57 374.38,380.14 378.68,373.85 382.96,367.77 387.19,361.99 391.61,356.23 396.43,350.20 401.55,344.01 406.83,337.77 412.19,331.56 417.49,325.50 422.64,319.68 427.52,314.20 432.01,309.17 436.02,304.69 439.42,300.85 442.10,297.76" fill="#C2C8AE" opacity="1"/><polygon points="249.11,443.13 249.44,445.43 249.85,448.33 250.34,451.74 250.89,455.58 251.49,459.74 252.12,464.14 252.78,468.67 253.45,473.25 254.12,477.79 254.78,482.18 255.41,486.33 256.01,490.16 256.60,493.79 257.20,497.42 257.81,501.02 258.43,504.59 259.04,508.11 259.65,511.56 260.25,514.94 260.84,518.23 261.40,521.41 261.94,524.47 262.45,527.40 262.92,530.18 263.32,532.71 263.64,534.92 263.91,536.90 264.14,538.71 264.34,540.43 264.55,542.11 264.77,543.83 265.03,545.65 265.35,547.64 265.74,549.86 266.23,552.38 266.83,555.25 267.53,558.51 268.31,562.11 269.16,565.98 270.07,570.08 271.04,574.35 272.06,578.72 273.12,583.14 274.21,587.56 275.33,591.91 276.46,596.13 277.61,600.18 278.76,603.99 279.93,607.62 281.15,611.15 282.41,614.61 283.70,617.99 285.01,621.29 286.34,624.54 287.68,627.73 289.02,630.87 290.36,633.96 291.70,637.02 293.02,640.05 294.32,643.06 295.63,646.09 296.99,649.14 298.36,652.19 299.76,655.22 301.15,658.20 302.52,661.13 303.87,663.97 305.18,666.71 306.43,669.33 307.62,671.81 308.73,674.12 309.75,676.25 310.69,678.20 311.56,679.97 312.37,681.58 313.12,683.06 313.81,684.40 314.46,685.64 315.06,686.80 315.62,687.88 316.14,688.90 316.64,689.90 317.10,690.87 317.54,691.85 317.95,692.82 318.31,693.75 318.64,694.64 318.93,695.49 319.19,696.30 319.42,697.06 319.62,697.77 319.80,698.43 319.96,699.04 320.11,699.59 320.25,700.09 320.38,700.52 323.62,699.48 323.49,699.10 323.35,698.65 323.19,698.12 323.01,697.51 322.80,696.83 322.57,696.09 322.31,695.29 322.02,694.43 321.69,693.53 321.32,692.58 320.92,691.58 320.46,690.55 319.98,689.51 319.47,688.50 318.95,687.47 318.40,686.43 317.82,685.34 317.20,684.19 316.54,682.97 315.84,681.64 315.08,680.20 314.27,678.61 313.39,676.87 312.45,674.95 311.42,672.82 310.29,670.52 309.09,668.05 307.82,665.44 306.50,662.71 305.14,659.88 303.75,656.97 302.36,654.01 300.96,651.00 299.57,647.97 298.21,644.95 296.88,641.94 295.57,638.94 294.23,635.91 292.88,632.86 291.53,629.78 290.17,626.66 288.83,623.50 287.49,620.29 286.18,617.01 284.89,613.68 283.63,610.27 282.41,606.78 281.24,603.21 280.09,599.45 278.94,595.44 277.79,591.25 276.66,586.93 275.56,582.54 274.49,578.14 273.46,573.79 272.48,569.54 271.55,565.45 270.68,561.58 269.89,558.00 269.17,554.75 268.56,551.90 268.07,549.42 267.67,547.24 267.34,545.29 267.06,543.51 266.83,541.81 266.61,540.14 266.38,538.43 266.14,536.60 265.85,534.60 265.51,532.36 265.08,529.82 264.60,527.03 264.07,524.09 263.52,521.03 262.94,517.85 262.34,514.56 261.72,511.19 261.09,507.74 260.46,504.23 259.83,500.67 259.20,497.07 258.59,493.46 257.99,489.84 257.37,486.03 256.72,481.88 256.05,477.50 255.36,472.97 254.68,468.39 254.00,463.86 253.35,459.47 252.74,455.31 252.17,451.48 251.67,448.06 251.24,445.16 250.89,442.87" fill="#CBD1B8" opacity="1"/><polygon points="410.76,420.92 409.13,422.40 407.10,424.18 404.70,426.23 402.01,428.54 399.08,431.07 395.98,433.80 392.76,436.70 389.48,439.76 386.21,442.95 383.01,446.24 379.92,449.61 377.03,453.04 374.20,456.68 371.29,460.67 368.33,464.94 365.35,469.40 362.37,473.98 359.44,478.61 356.57,483.22 353.81,487.73 351.16,492.06 348.68,496.15 346.38,499.91 344.30,503.27 342.45,506.22 340.80,508.85 339.32,511.20 337.99,513.32 336.79,515.28 335.69,517.11 334.66,518.89 333.68,520.65 332.73,522.46 331.77,524.35 330.80,526.39 329.77,528.63 328.73,531.02 327.72,533.46 326.73,535.95 325.78,538.48 324.85,541.05 323.94,543.66 323.06,546.29 322.20,548.95 321.36,551.63 320.54,554.32 319.73,557.02 318.95,559.73 318.17,562.48 317.42,565.28 316.67,568.14 315.95,571.02 315.25,573.93 314.57,576.84 313.91,579.75 313.28,582.63 312.68,585.48 312.10,588.29 311.56,591.03 311.04,593.70 310.56,596.31 310.09,598.88 309.65,601.42 309.24,603.92 308.85,606.39 308.49,608.83 308.16,611.24 307.87,613.62 307.61,615.98 307.38,618.32 307.19,620.64 307.04,622.94 306.93,625.21 306.87,627.45 306.84,629.66 306.84,631.84 306.88,633.99 306.95,636.12 307.06,638.22 307.19,640.31 307.35,642.39 307.53,644.45 307.74,646.50 307.96,648.55 308.22,650.59 308.51,652.62 308.84,654.63 309.19,656.63 309.57,658.61 309.97,660.58 310.40,662.53 310.84,664.46 311.29,666.38 311.76,668.28 312.23,670.17 312.71,672.04 313.23,673.95 313.80,675.92 314.40,677.91 315.03,679.90 315.67,681.87 316.32,683.81 316.95,685.69 317.57,687.49 318.15,689.18 318.68,690.75 319.15,692.18 319.55,693.43 319.89,694.53 320.19,695.50 320.44,696.34 320.65,697.07 320.83,697.70 320.98,698.24 321.11,698.71 321.22,699.11 321.31,699.48 321.40,699.81 321.48,700.12 321.56,700.42 324.44,699.58 324.35,699.29 324.26,699.00 324.16,698.68 324.05,698.32 323.93,697.90 323.78,697.43 323.61,696.87 323.42,696.24 323.19,695.50 322.92,694.65 322.61,693.68 322.25,692.57 321.82,691.29 321.33,689.85 320.78,688.27 320.19,686.58 319.56,684.79 318.92,682.93 318.26,681.01 317.61,679.06 316.98,677.10 316.37,675.15 315.80,673.23 315.29,671.36 314.80,669.50 314.31,667.63 313.83,665.75 313.37,663.86 312.92,661.95 312.49,660.04 312.08,658.10 311.69,656.16 311.33,654.20 311.00,652.23 310.70,650.25 310.44,648.25 310.20,646.23 309.98,644.21 309.79,642.18 309.62,640.14 309.47,638.08 309.36,636.01 309.27,633.92 309.22,631.80 309.20,629.66 309.21,627.49 309.27,625.29 309.36,623.06 309.49,620.80 309.66,618.52 309.87,616.21 310.12,613.88 310.40,611.52 310.71,609.13 311.05,606.72 311.42,604.27 311.82,601.78 312.24,599.26 312.69,596.70 313.16,594.10 313.65,591.44 314.18,588.70 314.74,585.91 315.33,583.07 315.94,580.19 316.58,577.30 317.25,574.40 317.93,571.50 318.64,568.63 319.36,565.79 320.10,563.00 320.85,560.27 321.62,557.57 322.41,554.88 323.21,552.20 324.03,549.53 324.87,546.89 325.74,544.27 326.62,541.68 327.53,539.13 328.46,536.61 329.42,534.15 330.41,531.73 331.43,529.37 332.43,527.15 333.38,525.13 334.30,523.26 335.22,521.48 336.17,519.74 337.18,517.99 338.25,516.16 339.44,514.21 340.75,512.09 342.21,509.73 343.85,507.10 345.70,504.13 347.77,500.76 350.06,496.98 352.53,492.89 355.16,488.55 357.91,484.04 360.76,479.44 363.67,474.81 366.62,470.23 369.58,465.79 372.51,461.54 375.38,457.57 378.17,453.96 381.02,450.57 384.06,447.22 387.22,443.95 390.46,440.78 393.70,437.73 396.90,434.83 399.98,432.10 402.90,429.57 405.58,427.25 407.97,425.18 410.01,423.38 411.64,421.88" fill="url(#l4g)" opacity="1"/><polygon points="282.45,284.84 282.21,286.47 281.90,288.52 281.53,290.92 281.11,293.61 280.67,296.53 280.20,299.64 279.72,302.87 279.24,306.16 278.77,309.46 278.33,312.72 277.93,315.86 277.57,318.84 277.26,321.73 276.97,324.62 276.69,327.53 276.44,330.44 276.20,333.36 275.97,336.29 275.74,339.22 275.52,342.15 275.30,345.08 275.07,348.00 274.84,350.93 274.59,353.85 274.33,356.78 274.06,359.74 273.78,362.71 273.49,365.69 273.21,368.67 272.93,371.64 272.65,374.60 272.39,377.54 272.13,380.46 271.90,383.34 271.69,386.17 271.51,388.96 271.35,391.66 271.20,394.28 271.07,396.82 270.96,399.32 270.86,401.78 270.77,404.24 270.70,406.71 270.64,409.22 270.60,411.78 270.56,414.42 270.54,417.15 270.53,420.00 270.53,422.97 270.55,426.03 270.58,429.18 270.63,432.40 270.69,435.67 270.76,438.98 270.84,442.31 270.93,445.67 271.02,449.02 271.13,452.35 271.23,455.66 271.35,458.93 271.46,462.20 271.57,465.50 271.68,468.84 271.80,472.19 271.93,475.53 272.06,478.87 272.21,482.18 272.38,485.45 272.56,488.67 272.77,491.83 273.01,494.91 273.27,497.89 273.57,500.79 273.92,503.63 274.30,506.40 274.71,509.11 275.14,511.77 275.58,514.37 276.02,516.93 276.46,519.44 276.88,521.91 277.28,524.35 277.66,526.76 277.99,529.14 278.28,531.43 278.53,533.60 278.74,535.67 278.92,537.67 279.09,539.64 279.27,541.62 279.45,543.62 279.66,545.69 279.89,547.84 280.18,550.12 280.51,552.56 280.92,555.18 281.38,557.98 281.89,560.93 282.45,564.02 283.04,567.22 283.66,570.51 284.31,573.86 284.98,577.27 285.68,580.69 286.39,584.11 287.10,587.51 287.83,590.87 288.55,594.16 289.28,597.44 290.03,600.78 290.79,604.17 291.57,607.57 292.37,610.98 293.17,614.37 294.00,617.72 294.83,621.01 295.68,624.22 296.54,627.34 297.42,630.33 298.30,633.19 299.20,635.88 300.11,638.41 301.04,640.80 301.97,643.09 302.92,645.28 303.88,647.42 304.84,649.53 305.82,651.63 306.82,653.75 307.82,655.92 308.84,658.18 309.87,660.54 310.96,663.07 312.13,665.77 313.35,668.59 314.61,671.48 315.88,674.40 317.15,677.30 318.39,680.14 319.59,682.87 320.71,685.45 321.76,687.82 322.69,689.95 323.50,691.78 324.20,693.33 324.80,694.66 325.31,695.79 325.75,696.74 326.13,697.54 326.45,698.20 326.72,698.76 326.95,699.22 327.15,699.62 327.33,699.98 327.49,700.31 327.65,700.66 330.35,699.34 330.16,698.98 329.98,698.62 329.78,698.26 329.57,697.87 329.34,697.43 329.06,696.90 328.74,696.26 328.36,695.50 327.92,694.57 327.40,693.47 326.79,692.16 326.10,690.62 325.27,688.80 324.33,686.68 323.27,684.32 322.13,681.75 320.93,679.03 319.67,676.20 318.40,673.30 317.11,670.39 315.85,667.50 314.61,664.69 313.43,662.00 312.33,659.46 311.27,657.09 310.23,654.82 309.20,652.63 308.20,650.51 307.21,648.42 306.24,646.34 305.28,644.24 304.34,642.08 303.41,639.85 302.49,637.52 301.59,635.05 300.70,632.41 299.81,629.60 298.93,626.65 298.07,623.57 297.21,620.39 296.37,617.12 295.54,613.79 294.72,610.42 293.92,607.03 293.13,603.63 292.35,600.26 291.59,596.92 290.85,593.64 290.11,590.37 289.38,587.02 288.65,583.63 287.93,580.22 287.23,576.81 286.54,573.42 285.88,570.08 285.24,566.80 284.64,563.62 284.08,560.54 283.56,557.60 283.08,554.82 282.67,552.24 282.32,549.84 282.03,547.59 281.78,545.46 281.57,543.41 281.37,541.42 281.18,539.45 281.00,537.48 280.80,535.46 280.57,533.37 280.31,531.18 280.01,528.86 279.65,526.46 279.26,524.03 278.84,521.58 278.40,519.10 277.95,516.59 277.50,514.04 277.05,511.45 276.61,508.81 276.19,506.12 275.80,503.38 275.44,500.58 275.13,497.71 274.86,494.75 274.61,491.70 274.39,488.56 274.19,485.35 274.01,482.09 273.85,478.79 273.70,475.46 273.56,472.12 273.43,468.77 273.30,465.44 273.18,462.14 273.05,458.87 272.93,455.60 272.81,452.30 272.69,448.96 272.58,445.62 272.48,442.27 272.38,438.94 272.30,435.63 272.23,432.37 272.17,429.16 272.12,426.02 272.09,422.96 272.07,420.00 272.07,417.16 272.08,414.43 272.10,411.80 272.13,409.25 272.18,406.75 272.24,404.28 272.31,401.83 272.40,399.37 272.50,396.89 272.61,394.35 272.74,391.74 272.89,389.04 273.06,386.26 273.26,383.44 273.47,380.57 273.71,377.66 273.96,374.72 274.22,371.76 274.49,368.79 274.77,365.80 275.04,362.82 275.30,359.85 275.56,356.89 275.81,353.95 276.04,351.02 276.26,348.09 276.48,345.16 276.69,342.23 276.90,339.30 277.11,336.37 277.32,333.45 277.55,330.53 277.79,327.63 278.05,324.73 278.33,321.84 278.63,318.96 278.97,315.99 279.36,312.85 279.78,309.60 280.24,306.30 280.70,303.01 281.17,299.78 281.62,296.68 282.06,293.75 282.46,291.06 282.81,288.66 283.11,286.61 283.35,284.96" fill="url(#l1g)" opacity="1"/><polygon points="248.66,352.10 248.86,353.90 249.11,356.19 249.40,358.88 249.73,361.91 250.09,365.19 250.48,368.66 250.88,372.24 251.29,375.84 251.70,379.41 252.12,382.86 252.52,386.12 252.90,389.12 253.28,391.89 253.65,394.55 254.03,397.12 254.41,399.63 254.79,402.09 255.18,404.53 255.57,406.98 255.97,409.45 256.38,411.99 256.79,414.60 257.22,417.31 257.65,420.14 258.10,423.14 258.55,426.28 259.01,429.54 259.49,432.88 259.96,436.28 260.45,439.71 260.94,443.13 261.44,446.52 261.95,449.83 262.46,453.06 262.98,456.15 263.50,459.09 264.04,461.88 264.59,464.57 265.16,467.18 265.73,469.70 266.31,472.15 266.90,474.54 267.48,476.89 268.06,479.19 268.63,481.47 269.19,483.73 269.73,485.98 270.26,488.24 270.77,490.48 271.26,492.66 271.74,494.81 272.21,496.91 272.67,498.99 273.13,501.06 273.59,503.12 274.05,505.18 274.52,507.26 275.00,509.36 275.50,511.49 276.01,513.66 276.55,515.91 277.12,518.25 277.72,520.65 278.33,523.09 278.95,525.54 279.57,527.97 280.18,530.37 280.76,532.70 281.32,534.94 281.85,537.07 282.33,539.05 282.76,540.87 283.10,542.42 283.36,543.69 283.55,544.73 283.69,545.63 283.81,546.44 283.92,547.25 284.05,548.11 284.21,549.08 284.43,550.22 284.72,551.60 285.11,553.27 285.61,555.30 286.21,557.70 286.90,560.42 287.65,563.40 288.47,566.61 289.35,569.99 290.27,573.49 291.22,577.06 292.21,580.66 293.22,584.23 294.24,587.72 295.26,591.10 296.28,594.30 297.31,597.38 298.38,600.44 299.48,603.47 300.60,606.46 301.74,609.43 302.90,612.37 304.06,615.28 305.23,618.17 306.40,621.02 307.57,623.85 308.72,626.64 309.86,629.41 310.99,632.14 312.12,634.81 313.23,637.44 314.35,640.03 315.47,642.59 316.58,645.13 317.71,647.66 318.84,650.20 319.99,652.75 321.15,655.32 322.33,657.93 323.53,660.58 324.80,663.35 326.16,666.28 327.58,669.32 329.03,672.42 330.50,675.54 331.96,678.61 333.37,681.61 334.72,684.47 335.99,687.15 337.14,689.59 338.14,691.76 338.98,693.60 339.66,695.10 340.19,696.33 340.59,697.30 340.88,698.05 341.09,698.61 341.21,699.00 341.29,699.27 341.33,699.47 341.36,699.65 341.41,699.89 341.48,700.20 341.58,700.50 344.42,699.50 344.34,699.29 344.30,699.19 344.27,699.05 344.22,698.83 344.14,698.52 344.02,698.12 343.85,697.62 343.61,696.99 343.29,696.19 342.86,695.18 342.31,693.93 341.62,692.40 340.76,690.55 339.74,688.37 338.58,685.92 337.30,683.24 335.94,680.39 334.52,677.40 333.06,674.33 331.58,671.22 330.12,668.13 328.70,665.10 327.34,662.18 326.07,659.42 324.86,656.78 323.67,654.18 322.50,651.61 321.35,649.07 320.21,646.55 319.08,644.02 317.96,641.49 316.84,638.94 315.72,636.37 314.60,633.76 313.47,631.10 312.34,628.39 311.19,625.62 310.02,622.83 308.85,620.01 307.67,617.17 306.50,614.30 305.33,611.40 304.17,608.48 303.03,605.54 301.91,602.57 300.81,599.57 299.75,596.55 298.72,593.50 297.70,590.34 296.68,586.99 295.66,583.52 294.65,579.97 293.66,576.40 292.70,572.84 291.77,569.35 290.89,565.98 290.06,562.79 289.30,559.81 288.61,557.09 287.99,554.70 287.49,552.69 287.10,551.06 286.81,549.73 286.59,548.64 286.43,547.72 286.30,546.89 286.17,546.09 286.05,545.26 285.89,544.32 285.68,543.23 285.41,541.92 285.04,540.33 284.60,538.50 284.11,536.51 283.58,534.38 283.01,532.13 282.41,529.80 281.79,527.40 281.17,524.97 280.54,522.53 279.92,520.10 279.32,517.70 278.74,515.38 278.19,513.14 277.67,510.98 277.17,508.85 276.68,506.76 276.20,504.69 275.73,502.63 275.27,500.58 274.80,498.52 274.33,496.44 273.85,494.33 273.36,492.19 272.86,490.00 272.34,487.76 271.80,485.49 271.24,483.22 270.67,480.96 270.09,478.68 269.50,476.38 268.92,474.04 268.33,471.66 267.74,469.23 267.16,466.73 266.59,464.15 266.04,461.48 265.50,458.71 264.97,455.80 264.44,452.73 263.92,449.52 263.41,446.22 262.90,442.84 262.40,439.43 261.91,436.01 261.42,432.61 260.94,429.26 260.47,426.00 260.00,422.86 259.55,419.86 259.10,417.01 258.67,414.30 258.24,411.68 257.83,409.15 257.42,406.68 257.02,404.23 256.62,401.80 256.23,399.34 255.85,396.85 255.46,394.29 255.08,391.64 254.70,388.88 254.30,385.90 253.89,382.64 253.47,379.20 253.05,375.64 252.63,372.04 252.22,368.46 251.83,365.00 251.46,361.72 251.12,358.69 250.82,356.00 250.56,353.71 250.34,351.90" fill="#6F6851" opacity="1"/></g></svg>
<svg style="left:0;top:0" width="1280" height="720"><polygon points="236.6,243.75 335.6,243.75 354.2,262 335.6,280.2 236.6,280.2" fill="#A9341A"/></svg>
<svg style="left:0;top:0" width="1280" height="720"><path d="M318.8 259.6 L322.2 256.6 L322.2 270.2" fill="none" stroke="#FBE6DA" stroke-width="1.7"/></svg>
<div class="t" style="left:661.10px;top:245.05px;font-size:59.6px;line-height:59.6px;color:#262626;font-weight:bold;transform:scaleX(0.9349);">ÍNDICE</div>
<div class="t" style="left:457.85px;top:354.05px;font-size:15.3px;line-height:15.3px;color:#4CAEDD;transform:scaleX(1.1083);">INTRODUCCIÓN</div>
<div class="r" style="left:459.4px;top:368.8px;width:128.9px;height:1.2px;background:#4AAEDC;"></div>
<div class="r" style="left:593px;top:369px;width:446px;height:2px;background:repeating-linear-gradient(90deg,#464642 0 2px,transparent 2px 4px);"></div>
<div class="t" style="left:1043.64px;top:354.56px;font-size:16px;line-height:16px;color:#444442;font-weight:bold;transform:scaleX(1.1154);">2</div>
<div class="t" style="left:458.13px;top:382.85px;font-size:15.3px;line-height:15.3px;color:#4CAEDD;transform:scaleX(1.0577);">DEFINICIÓN DE ACTIVIDAD FÍSICA Y DEPORTE</div>
<div class="r" style="left:459.4px;top:397.6px;width:361.4px;height:1.2px;background:#4AAEDC;"></div>
<div class="r" style="left:826px;top:398px;width:213px;height:2px;background:repeating-linear-gradient(90deg,#464642 0 2px,transparent 2px 4px);"></div>
<div class="t" style="left:1043.76px;top:383.36px;font-size:16px;line-height:16px;color:#444442;font-weight:bold;transform:scaleX(1.1013);">3</div>
<div class="t" style="left:458.57px;top:412.45px;font-size:15.3px;line-height:15.3px;color:#4CAEDD;transform:scaleX(1.0425);">CUALIDADES FÍSICAS BÁSICAS</div>
<div class="r" style="left:459.4px;top:427.2px;width:240.4px;height:1.2px;background:#4AAEDC;"></div>
<div class="r" style="left:704px;top:428px;width:335px;height:2px;background:repeating-linear-gradient(90deg,#464642 0 2px,transparent 2px 4px);"></div>
<div class="t" style="left:1044.00px;top:412.96px;font-size:16px;line-height:16px;color:#444442;font-weight:bold;transform:scaleX(1.0116);">4</div>
<div class="t" style="left:459.40px;top:442.45px;font-size:15.3px;line-height:15.3px;color:#4CAEDD;transform:scaleX(1.0202);">APTITUD CARDIORRESPIRATORIA</div>
<div class="r" style="left:459.4px;top:457.2px;width:257.9px;height:1.2px;background:#4AAEDC;"></div>
<div class="r" style="left:722px;top:458px;width:317px;height:2px;background:repeating-linear-gradient(90deg,#464642 0 2px,transparent 2px 4px);"></div>
<div class="t" style="left:1043.66px;top:442.96px;font-size:16px;line-height:16px;color:#444442;font-weight:bold;transform:scaleX(1.0875);">5</div>
<div class="t" style="left:458.55px;top:471.95px;font-size:15.3px;line-height:15.3px;color:#4CAEDD;transform:scaleX(1.0584);">CAMBIOS EN LA FUNCIÓN RESPIRATORIA</div>
<div class="r" style="left:459.4px;top:486.7px;width:326.1px;height:1.2px;background:#4AAEDC;"></div>
<div class="r" style="left:790px;top:487px;width:249px;height:2px;background:repeating-linear-gradient(90deg,#464642 0 2px,transparent 2px 4px);"></div>
<div class="t" style="left:1043.52px;top:472.46px;font-size:16px;line-height:16px;color:#444442;font-weight:bold;transform:scaleX(1.1299);">6</div>
<div class="t" style="left:458.57px;top:501.25px;font-size:15.3px;line-height:15.3px;color:#4CAEDD;transform:scaleX(1.0432);">CAMBIOS MUSCULOESQUELÉTICOS</div>
<div class="r" style="left:459.4px;top:516.0px;width:280.4px;height:1.2px;background:#4AAEDC;"></div>
<div class="r" style="left:744px;top:516px;width:295px;height:2px;background:repeating-linear-gradient(90deg,#464642 0 2px,transparent 2px 4px);"></div>
<div class="t" style="left:1043.39px;top:501.76px;font-size:16px;line-height:16px;color:#444442;font-weight:bold;transform:scaleX(1.1600);">7</div>
<div class="t" style="left:458.11px;top:531.75px;font-size:15.3px;line-height:15.3px;color:#4CAEDD;transform:scaleX(1.0721);">FIN</div>
<div class="r" style="left:459.4px;top:546.5px;width:23.8px;height:1.2px;background:#4AAEDC;"></div>
<div class="r" style="left:488px;top:547px;width:551px;height:2px;background:repeating-linear-gradient(90deg,#464642 0 2px,transparent 2px 4px);"></div>
<div class="t" style="left:1043.65px;top:532.26px;font-size:16px;line-height:16px;color:#444442;font-weight:bold;transform:scaleX(1.1013);">8</div>
<svg style="left:0;top:0" width="1280" height="720"><polygon points="434.7,358.0 442.5,358.0 446.9,361.2 442.5,364.5 434.7,364.5" fill="#A9341A"/><polygon points="434.7,386.8 442.5,386.8 446.9,390.0 442.5,393.3 434.7,393.3" fill="#A9341A"/><polygon points="434.7,416.4 442.5,416.4 446.9,419.6 442.5,422.9 434.7,422.9" fill="#A9341A"/><polygon points="434.7,446.4 442.5,446.4 446.9,449.6 442.5,452.9 434.7,452.9" fill="#A9341A"/><polygon points="434.7,475.9 442.5,475.9 446.9,479.1 442.5,482.4 434.7,482.4" fill="#A9341A"/><polygon points="434.7,505.2 442.5,505.2 446.9,508.4 442.5,511.7 434.7,511.7" fill="#A9341A"/><polygon points="434.7,535.7 442.5,535.7 446.9,538.9 442.5,542.2 434.7,542.2" fill="#A9341A"/></svg>
<svg style="left:0;top:0" width="1280" height="720">
<defs>
<clipPath id="pc"><circle cx="1158" cy="597" r="84"/></clipPath>
<linearGradient id="pg" x1="0" y1="0" x2="1" y2="1"><stop offset="0" stop-color="#CC4B26"/><stop offset="1" stop-color="#B8341A"/></linearGradient>
<filter id="blur2"><feGaussianBlur stdDeviation="2"/></filter>
</defs>
<g clip-path="url(#pc)">
<rect x="1070" y="510" width="180" height="180" fill="#D35230"/>
<rect x="1070" y="510" width="88" height="87" fill="#ED6C47"/>
<rect x="1158" y="510" width="90" height="87" fill="#FF8F6B"/>
<rect x="1062" y="547" width="102" height="110" rx="6" fill="#000" opacity="0.10"/><rect x="1062" y="550" width="98" height="102" rx="5" fill="#000" opacity="0.16"/>
</g>
<rect x="1062.5" y="550.5" width="93" height="92.5" rx="4.5" fill="url(#pg)"/>
<path d="M1088.6 622.2 L1088.6 570.7 L1111 570.7 C1122 570.7 1128.5 577.5 1128.5 587.4 C1128.5 597.4 1122 604.2 1111 604.2 L1099.3 604.2 L1099.3 622.2 Z M1099.3 579 L1099.3 596 L1109.5 596 C1115 596 1118.2 592.8 1118.2 587.5 C1118.2 582.2 1115 579 1109.5 579 Z" fill="#FFFFFF" fill-rule="evenodd"/>
</svg>
<svg style="left:0;top:0" width="1280" height="720">
<path d="M0 0 L21 0 L20.75 522.5  C23.3 520.7 30.5 514.3 36.0 511.7 C41.5 509.1 48.0 508.1 54.0 507.0 C60.0 505.9 66.0 505.5 72.0 505.3 C78.0 505.1 84.0 505.4 90.0 506.0 C96.0 506.6 102.7 507.8 108.0 509.0 C113.3 510.2 117.3 511.5 122.0 513.5 C126.7 515.5 130.7 517.5 136.0 521.0 C141.3 524.5 148.0 529.4 154.0 534.7 C160.0 540.0 166.6 546.8 172.0 552.8 C177.4 558.8 182.0 564.2 186.6 570.8 C191.2 577.4 195.7 584.7 199.3 592.5 C202.9 600.3 205.8 607.7 208.3 617.7 C210.8 627.8 212.7 639.9 214.4 652.8 C216.1 665.7 217.8 686.3 218.6 695.0 C219.4 703.7 219.3 703.3 219.5 705.0 L0 705 Z" fill="#C9482A"/>
<circle cx="99.3" cy="612.8" r="78" fill="#FFFFFF"/>
<g transform="translate(-4.5,2.5)" fill="#2F62E6">
<path d="M60.4 566.7 L97 566.7 Q100.5 566.7 100.5 570.2 L100.5 595.6 L87.5 595.6 L87.5 578.4 L69.8 578.4 L69.8 646 L87.5 646 L87.5 627 L100.5 627 L100.5 651 Q100.5 654.5 97 654.5 L60.4 654.5 Q56.9 654.5 56.9 651 L56.9 570.2 Q56.9 566.7 60.4 566.7 Z"/>
<path d="M107.5 567 L150.3 567 L150.3 578 L136 578 L136 657.2 L122.5 657.2 L122.5 578 L107.5 578 Z"/>
</g>
<g fill="#424242">
<path d="M60.4 566.7 L97 566.7 Q100.5 566.7 100.5 570.2 L100.5 595.6 L87.5 595.6 L87.5 578.4 L69.8 578.4 L69.8 646 L87.5 646 L87.5 627 L100.5 627 L100.5 651 Q100.5 654.5 97 654.5 L60.4 654.5 Q56.9 654.5 56.9 651 L56.9 570.2 Q56.9 566.7 60.4 566.7 Z"/>
<path d="M107.5 567 L150.3 567 L150.3 578 L136 578 L136 657.2 L122.5 657.2 L122.5 578 L107.5 578 Z"/>
</g>
</svg>
<div class="t" style="left:43.78px;top:604.55px;font-size:14px;line-height:14px;color:#2B3F73;font-weight:bold;transform:scaleX(0.6923);-webkit-text-stroke:0.6px #2B3F73;">C</div>
<div class="t" style="left:59.95px;top:604.55px;font-size:14px;line-height:14px;color:#C3CEEA;font-weight:bold;transform:scaleX(0.6067);-webkit-text-stroke:0.6px #C3CEEA;">R</div>
<div class="t" style="left:75.53px;top:604.55px;font-size:14px;line-height:14px;color:#2B3F73;font-weight:bold;transform:scaleX(0.6774);-webkit-text-stroke:0.6px #2B3F73;">A</div>
<div class="t" style="left:90.46px;top:604.55px;font-size:14px;line-height:14px;color:#2B3F73;font-weight:bold;transform:scaleX(0.8265);-webkit-text-stroke:0.6px #2B3F73;">M</div>
<div class="t" style="left:107.31px;top:604.55px;font-size:14px;line-height:14px;color:#2B3F73;font-weight:bold;transform:scaleX(0.8675);-webkit-text-stroke:0.6px #2B3F73;">T</div>
<div class="t" style="left:122.87px;top:604.55px;font-size:14px;line-height:14px;color:#C3CEEA;font-weight:bold;transform:scaleX(0.8101);-webkit-text-stroke:0.6px #C3CEEA;">E</div>
<div class="t" style="left:138.44px;top:604.55px;font-size:14px;line-height:14px;color:#2B3F73;font-weight:bold;transform:scaleX(0.5934);-webkit-text-stroke:0.6px #2B3F73;">C</div>
<div class="t" style="left:154.40px;top:604.55px;font-size:14px;line-height:14px;color:#2B3F73;font-weight:bold;transform:scaleX(0.6627);-webkit-text-stroke:0.6px #2B3F73;">H</div>
<div class="r" style="left:0px;top:695px;width:1280px;height:25px;background:#C9482A;"></div>
<div class="r" style="left:1260px;top:0px;width:20px;height:720px;background:#C9482A;"></div>
</body></html>
